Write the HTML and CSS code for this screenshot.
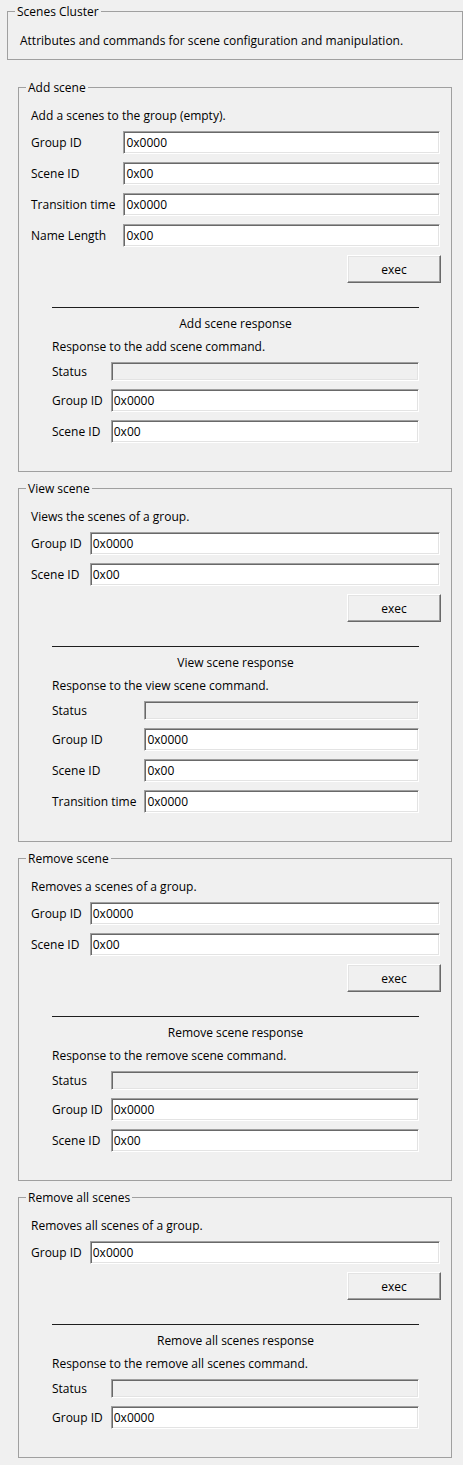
FILE: index.html
```html
<!DOCTYPE html>
<html lang="en">
<head>
<meta charset="utf-8">
<title>Scenes Cluster</title>
<link rel="stylesheet" href="styles.css">
</head>
<body>
<div class="page">
  <fieldset class="group cluster">
    <legend class="group-title">Scenes Cluster</legend>
    <div class="cluster-body">
      <p class="desc">Attributes and commands for scene configuration and manipulation.</p>
    </div>
  </fieldset>

  <fieldset class="group cmd">
    <legend class="group-title">Add scene</legend>
    <div class="cmd-body">
      <p class="desc">Add a scenes to the group (empty).</p>
      <div class="form">
        <label class="lbl">Group ID</label><input class="field" type="text" value="0x0000">
        <label class="lbl">Scene ID</label><input class="field" type="text" value="0x00">
        <label class="lbl">Transition time</label><input class="field" type="text" value="0x0000">
        <label class="lbl">Name Length</label><input class="field" type="text" value="0x00">
      </div>
      <div class="actions"><button class="btn" type="button">exec</button></div>
      <div class="response">
        <div class="sep"></div>
        <p class="resp-title">Add scene response</p>
        <p class="desc">Response to the add scene command.</p>
        <div class="form">
          <span class="lbl">Status</span><div class="status"></div>
          <label class="lbl">Group ID</label><input class="field" type="text" value="0x0000">
          <label class="lbl">Scene ID</label><input class="field" type="text" value="0x00">
        </div>
      </div>
    </div>
  </fieldset>

  <fieldset class="group cmd">
    <legend class="group-title">View scene</legend>
    <div class="cmd-body">
      <p class="desc">Views the scenes of a group.</p>
      <div class="form">
        <label class="lbl">Group ID</label><input class="field" type="text" value="0x0000">
        <label class="lbl">Scene ID</label><input class="field" type="text" value="0x00">
      </div>
      <div class="actions"><button class="btn" type="button">exec</button></div>
      <div class="response">
        <div class="sep"></div>
        <p class="resp-title">View scene response</p>
        <p class="desc">Response to the view scene command.</p>
        <div class="form">
          <span class="lbl">Status</span><div class="status"></div>
          <label class="lbl">Group ID</label><input class="field" type="text" value="0x0000">
          <label class="lbl">Scene ID</label><input class="field" type="text" value="0x00">
          <label class="lbl">Transition time</label><input class="field" type="text" value="0x0000">
        </div>
      </div>
    </div>
  </fieldset>

  <fieldset class="group cmd">
    <legend class="group-title">Remove scene</legend>
    <div class="cmd-body">
      <p class="desc">Removes a scenes of a group.</p>
      <div class="form">
        <label class="lbl">Group ID</label><input class="field" type="text" value="0x0000">
        <label class="lbl">Scene ID</label><input class="field" type="text" value="0x00">
      </div>
      <div class="actions"><button class="btn" type="button">exec</button></div>
      <div class="response">
        <div class="sep"></div>
        <p class="resp-title">Remove scene response</p>
        <p class="desc">Response to the remove scene command.</p>
        <div class="form">
          <span class="lbl">Status</span><div class="status"></div>
          <label class="lbl">Group ID</label><input class="field" type="text" value="0x0000">
          <label class="lbl">Scene ID</label><input class="field" type="text" value="0x00">
        </div>
      </div>
    </div>
  </fieldset>

  <fieldset class="group cmd">
    <legend class="group-title">Remove all scenes</legend>
    <div class="cmd-body">
      <p class="desc">Removes all scenes of a group.</p>
      <div class="form">
        <label class="lbl">Group ID</label><input class="field" type="text" value="0x0000">
      </div>
      <div class="actions"><button class="btn" type="button">exec</button></div>
      <div class="response">
        <div class="sep"></div>
        <p class="resp-title">Remove all scenes response</p>
        <p class="desc">Response to the remove all scenes command.</p>
        <div class="form">
          <span class="lbl">Status</span><div class="status"></div>
          <label class="lbl">Group ID</label><input class="field" type="text" value="0x0000">
        </div>
      </div>
    </div>
  </fieldset>
</div>
</body>
</html>
```
FILE: styles.css
```css
html {
  background: #f0f0f0;
}

body {
  margin: 0;
  font-family: "Open Sans", "Noto Sans", sans-serif;
  font-size: 12px;
  line-height: 15px;
  color: #000;
}

.page {
  padding: 4px 0 0 7px;
}

.group {
  margin: 0;
  padding: 0;
  min-width: 0;
  border: 1px solid #a0a0a0;
}

.group-title {
  margin-left: 7px;
  padding: 0 2px;
  line-height: 15px;
}

.cluster {
  margin-bottom: 20px;
}

.cluster-body {
  padding: 14px 12px 11px 12px;
}

.cmd {
  margin: 0 11px 9px 11px;
}

.cmd-body {
  display: flex;
  flex-direction: column;
  gap: 8px;
  padding: 13px 11px 28px 12px;
}

.desc {
  margin: 0;
}

.form {
  display: grid;
  grid-template-columns: auto 1fr;
  column-gap: 8px;
  row-gap: 8px;
  align-items: center;
}

.lbl {
  white-space: nowrap;
}

.field,
.status {
  box-sizing: border-box;
  width: 100%;
  margin: 0;
  border: 1px solid;
  border-color: #a0a0a0 #ffffff #ffffff #a0a0a0;
  box-shadow: inset 1px 1px 0 #696969, inset -1px -1px 0 #e3e3e3;
  outline: none;
}

.field {
  height: 23px;
  padding: 0 2px;
  background: #ffffff;
  font: inherit;
  color: #000;
}

.status {
  height: 19px;
  background: #f0f0f0;
}

.actions {
  display: flex;
  justify-content: flex-end;
}

.btn {
  box-sizing: border-box;
  width: 94px;
  height: 28px;
  margin: 0 -1px 0 0;
  padding: 0;
  font: inherit;
  color: #000;
  background: #f0f0f0;
  border: 1px solid;
  border-color: #ffffff #696969 #696969 #ffffff;
  box-shadow: inset -1px -1px 0 #a0a0a0, inset 1px 1px 0 #e3e3e3;
}

.response {
  display: flex;
  flex-direction: column;
  gap: 8px;
  margin-top: 16px;
  padding: 0 21px;
}

.sep {
  height: 1px;
  background: #1e1e1e;
}

.resp-title {
  margin: 0;
  text-align: center;
}
```
